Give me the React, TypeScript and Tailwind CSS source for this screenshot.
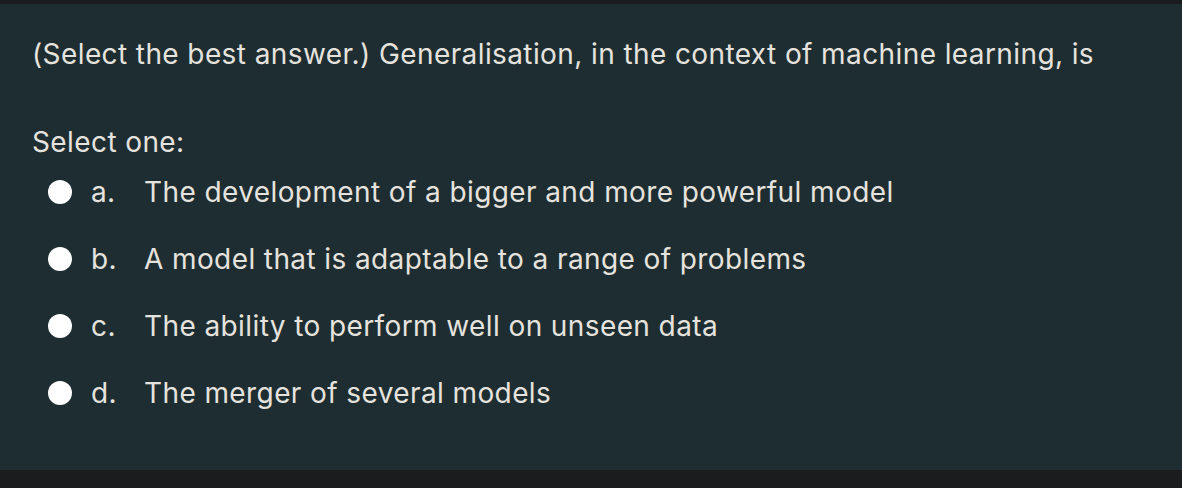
const options = [
  { key: "a.", text: "The development of a bigger and more powerful model" },
  { key: "b.", text: "A model that is adaptable to a range of problems" },
  { key: "c.", text: "The ability to perform well on unseen data" },
  { key: "d.", text: "The merger of several models" },
];

export default function App() {
  return (
    <div
      className="w-[1182px] h-[488px] bg-[#1b1c1d] pt-[4px] text-[#e6e3de] overflow-hidden"
      style={{ fontFamily: "Inter, 'Noto Sans', sans-serif" }}
    >
      <div className="h-[466px] bg-[#1e2d32] pl-[32px] pt-[32px] tracking-[0.4px]">
        <p className="text-[28px] leading-[36px] whitespace-nowrap">
          (Select the best answer.) Generalisation, in the context of machine
          learning, is
        </p>

        <p className="mt-[52px] text-[28px] leading-[36px]">Select one:</p>

        <div className="mt-[14px] flex flex-col gap-[31px]">
          {options.map((o) => (
            <div key={o.key} className="flex items-center h-[36px]">
              <span className="ml-[16px] w-[24px] h-[24px] rounded-full bg-white shrink-0" />
              <span className="ml-[19px] w-[53px] text-[28px]">{o.key}</span>
              <span className="text-[28px]">{o.text}</span>
            </div>
          ))}
        </div>
      </div>
    </div>
  );
}
